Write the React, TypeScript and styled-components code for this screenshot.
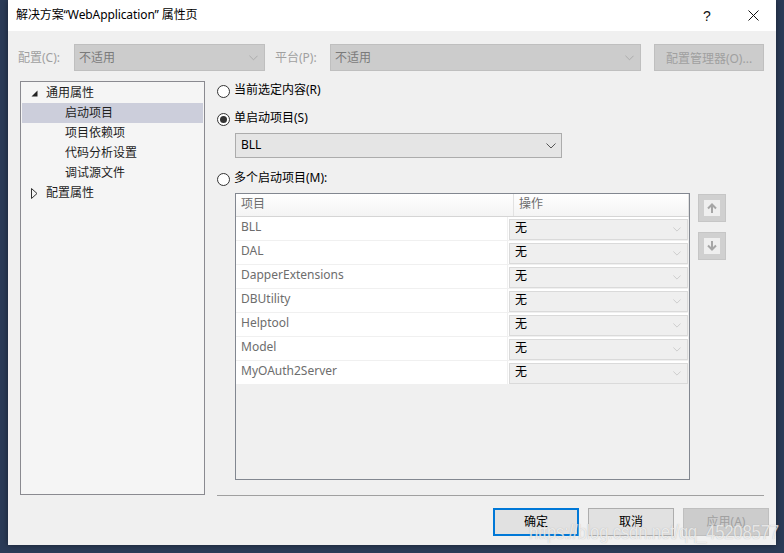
import React from 'react'
import styled, { createGlobalStyle } from 'styled-components'

const GlobalStyle = createGlobalStyle`
  html, body {
    margin: 0;
    padding: 0;
    background: #2b3b57;
  }
  body {
    font-family: "Noto Sans", "Noto Sans CJK SC", sans-serif;
    font-size: 12px;
  }
`

const projects = ['BLL', 'DAL', 'DapperExtensions', 'DBUtility', 'Helptool', 'Model', 'MyOAuth2Server']

const treeItems = [
  { label: '通用属性', level: 0, expander: 'open' },
  { label: '启动项目', level: 1, selected: true },
  { label: '项目依赖项', level: 1 },
  { label: '代码分析设置', level: 1 },
  { label: '调试源文件', level: 1 },
  { label: '配置属性', level: 0, expander: 'closed' },
]

const Chevron = ({ color = '#606060', size = 9 }: { color?: string; size?: number }) => (
  <svg width={size} height={Math.ceil(size / 2) + 1} viewBox="0 0 10 6">
    <path d="M0.5 0.5 L5 5 L9.5 0.5" fill="none" stroke={color} strokeWidth="1" />
  </svg>
)

const Arrow = ({ down }: { down?: boolean }) => (
  <svg width="12" height="12" viewBox="0 0 12 12" style={down ? { transform: 'rotate(180deg)' } : undefined}>
    <path d="M6 11 V2.5 M2 6.5 L6 2.5 L10 6.5" fill="none" stroke="#a6a6a6" strokeWidth="2" />
  </svg>
)

const Expander = ({ open }: { open: boolean }) =>
  open ? (
    <svg width="7" height="7" viewBox="0 0 7 7">
      <path d="M6.5 0.5 L6.5 6.5 L0.5 6.5 Z" fill="#222" />
    </svg>
  ) : (
    <svg width="7" height="11" viewBox="0 0 7 11">
      <path d="M0.5 0.5 L6 5.5 L0.5 10.5 Z" fill="none" stroke="#333" strokeWidth="1" />
    </svg>
  )

const App = () => {
  return (
    <Screen>
      <GlobalStyle />
      <Dialog>
        <TitleBar>
          <Title>解决方案“WebApplication” 属性页</Title>
          <WindowButton>?</WindowButton>
          <WindowButton>
            <svg width="11" height="11" viewBox="0 0 11 11">
              <path d="M0.5 0.5 L10.5 10.5 M10.5 0.5 L0.5 10.5" stroke="#111" strokeWidth="1" />
            </svg>
          </WindowButton>
        </TitleBar>

        <ConfigRow>
          <DimLabel $width={56}>配置(C):</DimLabel>
          <DisabledSelect $width={191}>
            <span>不适用</span>
            <Chevron color="#a8a8a8" />
          </DisabledSelect>
          <DimLabel $width={55} $gap={10}>平台(P):</DimLabel>
          <DisabledSelect $width={311}>
            <span>不适用</span>
            <Chevron color="#a8a8a8" />
          </DisabledSelect>
          <DisabledButton $width={110} $gap={13}>配置管理器(O)...</DisabledButton>
        </ConfigRow>

        <Main>
          <Tree>
            {treeItems.map((item) => (
              <TreeRow key={item.label} $level={item.level} $selected={!!item.selected}>
                <ExpanderSlot>
                  {item.expander && <Expander open={item.expander === 'open'} />}
                </ExpanderSlot>
                <span>{item.label}</span>
              </TreeRow>
            ))}
          </Tree>

          <Pane>
            <RadioRow>
              <Radio />
              <span>当前选定内容(R)</span>
            </RadioRow>
            <RadioRow $top={8}>
              <Radio $checked />
              <span>单启动项目(S)</span>
            </RadioRow>
            <ProjectSelect>
              <span>BLL</span>
              <Chevron color="#555" size={10} />
            </ProjectSelect>
            <RadioRow $top={11}>
              <Radio />
              <span>多个启动项目(M):</span>
            </RadioRow>

            <GridArea>
              <Grid>
                <HeaderRow>
                  <HeaderCell $width={272}>项目</HeaderCell>
                  <HeaderCell>操作</HeaderCell>
                </HeaderRow>
                {projects.map((p) => (
                  <GridRow key={p}>
                    <NameCell>{p}</NameCell>
                    <ActionCell>
                      <CellCombo>
                        <span>无</span>
                        <Chevron color="#c4c4c4" size={8} />
                      </CellCombo>
                    </ActionCell>
                  </GridRow>
                ))}
              </Grid>
              <MoveButtons>
                <MoveButton>
                  <Arrow />
                </MoveButton>
                <MoveButton>
                  <Arrow down />
                </MoveButton>
              </MoveButtons>
            </GridArea>
          </Pane>
        </Main>

        <Separator />

        <Footer>
          <DialogButton $primary>确定</DialogButton>
          <DialogButton>取消</DialogButton>
          <DialogButton $disabled>应用(A)</DialogButton>
        </Footer>
      </Dialog>
      <Watermark>https://blog.csdn.net/qq_45208577</Watermark>
    </Screen>
  )
}

const Screen = styled.div`
  position: relative;
  width: 784px;
  height: 553px;
  box-sizing: border-box;
  padding: 0 8px 8px;
  background: #2b3b57;
  overflow: hidden;
`

const Dialog = styled.div`
  width: 768px;
  height: 545px;
  display: flex;
  flex-direction: column;
  background: #f0f0f0;
  box-shadow: 0 0 6px rgba(0, 0, 0, 0.45);
`

const TitleBar = styled.div`
  height: 31px;
  display: flex;
  align-items: center;
  padding-left: 8px;
  background: #fff;
  color: #000;
`

const Title = styled.div`
  flex: 1;
  font-size: 12px;
  line-height: 16px;
  padding-bottom: 2px;
  letter-spacing: -0.1px;
`

const WindowButton = styled.div`
  width: 46px;
  height: 31px;
  display: flex;
  align-items: center;
  justify-content: center;
  font-family: "Liberation Sans", sans-serif;
  font-size: 14px;
  color: #111;
`

const ConfigRow = styled.div`
  height: 27px;
  margin-top: 13px;
  display: flex;
  align-items: center;
  padding: 0 12px 0 10px;
`

const DimLabel = styled.div<{ $width: number; $gap?: number }>`
  width: ${(p) => p.$width}px;
  margin-left: ${(p) => p.$gap ?? 0}px;
  color: #a0a0a0;
  line-height: 16px;
`

const DisabledSelect = styled.div<{ $width: number }>`
  width: ${(p) => p.$width}px;
  height: 27px;
  box-sizing: border-box;
  display: flex;
  align-items: center;
  justify-content: space-between;
  padding: 0 6px 0 4px;
  background: #cccccc;
  border: 1px solid #bfbfbf;
  color: #7a7a7a;
  line-height: 16px;
`

const DisabledButton = styled.div<{ $width: number; $gap?: number }>`
  width: ${(p) => p.$width}px;
  height: 27px;
  box-sizing: border-box;
  margin-left: ${(p) => p.$gap ?? 0}px;
  display: flex;
  align-items: center;
  justify-content: center;
  background: #cccccc;
  border: 1px solid #bfbfbf;
  color: #a0a0a0;
`

const Main = styled.div`
  height: 414px;
  margin-top: 10px;
  display: flex;
`

const Tree = styled.div`
  width: 185px;
  height: 414px;
  box-sizing: border-box;
  margin-left: 12px;
  padding: 1px 1px 0;
  background: #f5f5f5;
  border: 1px solid #8a8a90;
`

const TreeRow = styled.div<{ $level: number; $selected: boolean }>`
  height: 20px;
  display: flex;
  align-items: center;
  padding-left: ${(p) => (p.$level === 0 ? 9 : 28)}px;
  background: ${(p) => (p.$selected ? '#cccedb' : 'transparent')};
  color: #1e1e1e;
  line-height: 16px;
  & > span:last-child {
    padding-bottom: 1px;
  }
`

const ExpanderSlot = styled.span`
  width: 15px;
  display: flex;
  align-items: center;
`

const Pane = styled.div`
  flex: 1;
  margin-left: 12px;
  display: flex;
  flex-direction: column;
`

const RadioRow = styled.div<{ $top?: number }>`
  height: 20px;
  margin-top: ${(p) => p.$top ?? 0}px;
  display: flex;
  align-items: center;
  gap: 4px;
  color: #000;
  line-height: 16px;
  & > span:last-child {
    padding-bottom: 2px;
  }
`

const Radio = styled.span<{ $checked?: boolean }>`
  width: 13px;
  height: 13px;
  box-sizing: border-box;
  border-radius: 50%;
  border: 1px solid #333;
  background: #fff;
  display: flex;
  align-items: center;
  justify-content: center;
  &::after {
    content: '';
    width: 7px;
    height: 7px;
    border-radius: 50%;
    background: ${(p) => (p.$checked ? '#333' : 'transparent')};
  }
`

const ProjectSelect = styled.div`
  width: 327px;
  height: 25px;
  box-sizing: border-box;
  margin: 4px 0 0 18px;
  display: flex;
  align-items: center;
  justify-content: space-between;
  padding: 0 5px 0 5px;
  background: #e5e5e5;
  border: 1px solid #acacac;
  color: #000;
  line-height: 16px;
  & > span {
    padding-bottom: 1px;
  }
`

const GridArea = styled.div`
  margin: 4px 0 0 18px;
  display: flex;
  align-items: flex-start;
`

const Grid = styled.div`
  width: 455px;
  height: 287px;
  box-sizing: border-box;
  background: #f0f0f0;
  border: 1px solid #828790;
`

const HeaderRow = styled.div`
  height: 23px;
  display: flex;
  box-sizing: border-box;
  background: linear-gradient(#ffffff, #f4f4f4);
  border-bottom: 1px solid #d5d5d5;
`

const HeaderCell = styled.div<{ $width?: number }>`
  ${(p) => (p.$width ? `width: ${p.$width}px;` : 'flex: 1;')}
  display: flex;
  align-items: center;
  padding: 0 0 2px 5px;
  border-right: 1px solid #e2e2e2;
  color: #6d6d6d;
  line-height: 16px;
`

const GridRow = styled.div`
  height: 24px;
  box-sizing: border-box;
  display: flex;
  margin-right: 1px;
  border-bottom: 1px solid #f0f0f0;
  background: #fff;
`

const NameCell = styled.div`
  width: 272px;
  box-sizing: border-box;
  display: flex;
  align-items: center;
  padding: 0 0 3px 5px;
  border-right: 1px solid #f0f0f0;
  color: #6d6d6d;
  line-height: 16px;
`

const ActionCell = styled.div`
  flex: 1;
  display: flex;
  align-items: center;
  padding: 1px 0 0 1px;
`

const CellCombo = styled.div`
  flex: 1;
  height: 21px;
  box-sizing: border-box;
  display: flex;
  align-items: center;
  justify-content: space-between;
  padding: 0 6px 0 5px;
  background: #efefef;
  border: 1px solid #dadada;
  color: #000;
  line-height: 16px;
  & > span {
    padding-bottom: 2px;
  }
`

const MoveButtons = styled.div`
  margin-left: 8px;
  margin-top: 1px;
  display: flex;
  flex-direction: column;
  gap: 10px;
`

const MoveButton = styled.div`
  width: 28px;
  height: 28px;
  box-sizing: border-box;
  display: flex;
  align-items: center;
  justify-content: center;
  background: #d0d0d0;
  border: 1px solid #c6c6c6;
  & > svg {
    background: #efefef;
    padding: 2px;
  }
`

const Separator = styled.div`
  height: 1px;
  margin-left: 209px;
  width: 547px;
  background: #a0a0a0;
`

const Footer = styled.div`
  margin-top: 12px;
  padding-right: 7px;
  display: flex;
  justify-content: flex-end;
  gap: 9px;
`

const DialogButton = styled.div<{ $primary?: boolean; $disabled?: boolean }>`
  width: 86px;
  height: 28px;
  box-sizing: border-box;
  display: flex;
  align-items: center;
  justify-content: center;
  padding-bottom: 1px;
  background: ${(p) => (p.$disabled ? '#cccccc' : '#e1e1e1')};
  border: ${(p) => (p.$primary ? '2px solid #0078d7' : p.$disabled ? '1px solid #bfbfbf' : '1px solid #adadad')};
  color: ${(p) => (p.$disabled ? '#a0a0a0' : '#000')};
  line-height: 16px;
`

const Watermark = styled.div`
  position: absolute;
  left: 529px;
  top: 520px;
  font-family: "Liberation Sans", Arial, sans-serif;
  font-size: 21px;
  letter-spacing: -0.3px;
  color: rgba(255, 255, 255, 0.72);
  text-shadow: 0 0 1px rgba(120, 120, 120, 0.5);
  transform: scaleX(0.8);
  transform-origin: left center;
  white-space: nowrap;
  pointer-events: none;
`

export default App
